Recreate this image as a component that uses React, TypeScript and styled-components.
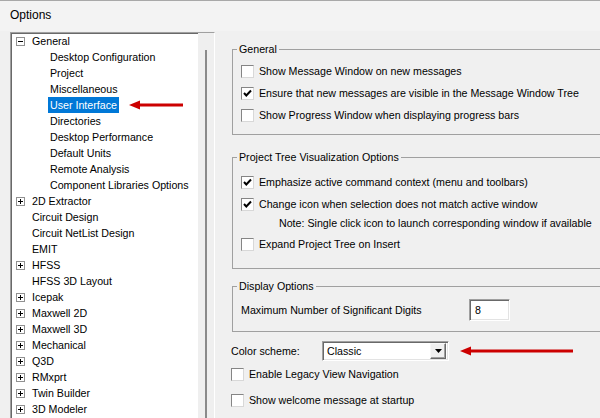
import React from 'react';
import styled, { createGlobalStyle } from 'styled-components';

const GlobalStyle = createGlobalStyle`
    html, body {
        margin: 0;
        padding: 0;
    }
    body {
        background: #f0f0f0;
        overflow: hidden;
        font-family: 'Liberation Sans', Arial, sans-serif;
    }
`;

const uiFont = '10.67px';

const Window = styled.div`
    width: 600px;
    height: 418px;
    overflow: hidden;
    display: flex;
    flex-direction: column;
    background: #f0f0f0;
    color: #000;
`;

const TitleBar = styled.div`
    flex-shrink: 0;
    height: 31px;
    box-sizing: border-box;
    border-top: 1px solid #a8a8a8;
    background: #f3f3f3;
    display: flex;
    align-items: center;
    padding: 0 0 2px 10px;
    font-size: 12px;
`;

const Body = styled.div`
    flex: 1;
    min-height: 0;
    display: flex;
    gap: 16px;
    padding: 1px 0 0 10px;
    font-size: ${uiFont};
`;

const TreePane = styled.div`
    flex-shrink: 0;
    width: 205px;
    height: 400px;
    box-sizing: border-box;
    display: flex;
    background: #fff;
    border: 1px solid;
    border-color: #a0a0a0 #fff #fff #a0a0a0;
    box-shadow: inset 1px 1px 0 #696969;
`;

const TreeList = styled.div`
    flex: 1;
`;

const ScrollTrack = styled.div`
    width: 16px;
    background: #efefef;
    display: flex;
    justify-content: center;
    padding-top: 17px;
`;

const ScrollThumb = styled.div`
    width: 2px;
    height: 100%;
    background: #8a8a8a;
`;

const TreeRow = styled.div<{ $level: number }>`
    display: flex;
    align-items: center;
    height: 16px;
    padding-left: ${p => 5 + p.$level * 18}px;
    white-space: nowrap;
`;

const ExpanderSlot = styled.span`
    width: 9px;
    height: 9px;
    margin-right: 5px;
    display: flex;
    flex-shrink: 0;
`;

const TreeLabel = styled.span<{ $selected?: boolean }>`
    line-height: 16px;
    padding: 0 2px;
    background: ${p => (p.$selected ? '#0078d7' : 'transparent')};
    color: ${p => (p.$selected ? '#fff' : '#000')};
`;

const Panel = styled.div`
    width: 400px;
    flex-shrink: 0;
    display: flex;
    flex-direction: column;
    padding-top: 10px;
`;

const GroupBox = styled.fieldset<{ $padTop: number; $padBottom: number; $gap: number }>`
    margin: ${p => p.$gap}px 0 0 1px;
    padding: ${p => p.$padTop}px 0 ${p => p.$padBottom}px 8px;
    border: 1px solid #a0a0a0;
    min-width: 0;
`;

const Legend = styled.legend`
    padding: 0 2px;
    margin-left: -4px;
    line-height: 14px;
    font-size: ${uiFont};
`;

const CheckRow = styled.div<{ $height?: number }>`
    display: flex;
    align-items: center;
    gap: 5px;
    height: ${p => p.$height ?? 22}px;
    white-space: nowrap;
`;

const Box = styled.span`
    width: 13px;
    height: 13px;
    box-sizing: border-box;
    flex-shrink: 0;
    background: #fff;
    border: 1px solid;
    border-color: #858585 #d8d8d8 #d8d8d8 #858585;
    display: flex;
`;

const NoteRow = styled.div`
    height: 15px;
    display: flex;
    align-items: center;
    padding-left: 38px;
    white-space: nowrap;
`;

const FieldRow = styled.div<{ $height: number; $labelWidth: number }>`
    display: flex;
    align-items: center;
    height: ${p => p.$height}px;
    white-space: nowrap;

    & > span:first-child {
        width: ${p => p.$labelWidth}px;
        flex-shrink: 0;
    }
`;

const Sunken = styled.div`
    box-sizing: border-box;
    background: #fff;
    border: 1px solid;
    border-color: #a0a0a0 #fff #fff #a0a0a0;
    box-shadow: inset 1px 1px 0 #696969, inset -1px -1px 0 #e3e3e3;
    display: flex;
    align-items: center;
`;

const NumberInput = styled(Sunken)`
    width: 41px;
    height: 22px;
    padding-left: 5px;
`;

const Select = styled(Sunken)`
    width: 127px;
    height: 20px;
    padding: 0 2px 0 4px;
    justify-content: space-between;
`;

const DropButton = styled.span`
    width: 16px;
    height: 16px;
    box-sizing: border-box;
    background: #f0f0f0;
    border: 1px solid;
    border-color: #f8f8f8 #696969 #696969 #f8f8f8;
    box-shadow: inset -1px -1px 0 #a0a0a0;
    display: flex;
    align-items: center;
    justify-content: center;
`;

const ArrowMark = styled.svg<{ $gap: number }>`
    margin-left: ${p => p.$gap}px;
    flex-shrink: 0;
`;

const OuterRows = styled.div`
    margin-top: 9px;
    display: flex;
    flex-direction: column;
`;

const RedArrow = ({ width, gap }: { width: number; gap: number }) => (
    <ArrowMark $gap={gap} width={width} height={10} viewBox={`0 0 ${width} 10`}>
        <polygon points="0,5 11,0.5 11,9.5" fill="#cc0000" />
        <rect x={10} y={3.5} width={width - 10} height={3} fill="#cc0000" />
    </ArrowMark>
);

const Expander = ({ open }: { open: boolean }) => (
    <svg width={9} height={9} viewBox="0 0 9 9">
        <rect x={0.5} y={0.5} width={8} height={8} fill="#fff" stroke="#919191" />
        <rect x={2} y={4} width={5} height={1} fill="#000" />
        {!open && <rect x={4} y={2} width={1} height={5} fill="#000" />}
    </svg>
);

const CheckBox = ({ checked }: { checked?: boolean }) => (
    <Box>
        {checked && (
            <svg width={11} height={11} viewBox="0 0 11 11">
                <polyline points="2,5 4.3,7.5 9,2.5" fill="none" stroke="#000" strokeWidth={2} />
            </svg>
        )}
    </Box>
);

interface TreeNode {
    label: string;
    level: number;
    expander?: 'open' | 'closed';
    selected?: boolean;
}

const treeNodes: TreeNode[] = [
    { label: 'General', level: 0, expander: 'open' },
    { label: 'Desktop Configuration', level: 1 },
    { label: 'Project', level: 1 },
    { label: 'Miscellaneous', level: 1 },
    { label: 'User Interface', level: 1, selected: true },
    { label: 'Directories', level: 1 },
    { label: 'Desktop Performance', level: 1 },
    { label: 'Default Units', level: 1 },
    { label: 'Remote Analysis', level: 1 },
    { label: 'Component Libraries Options', level: 1 },
    { label: '2D Extractor', level: 0, expander: 'closed' },
    { label: 'Circuit Design', level: 0 },
    { label: 'Circuit NetList Design', level: 0 },
    { label: 'EMIT', level: 0 },
    { label: 'HFSS', level: 0, expander: 'closed' },
    { label: 'HFSS 3D Layout', level: 0 },
    { label: 'Icepak', level: 0, expander: 'closed' },
    { label: 'Maxwell 2D', level: 0, expander: 'closed' },
    { label: 'Maxwell 3D', level: 0, expander: 'closed' },
    { label: 'Mechanical', level: 0, expander: 'closed' },
    { label: 'Q3D', level: 0, expander: 'closed' },
    { label: 'RMxprt', level: 0, expander: 'closed' },
    { label: 'Twin Builder', level: 0, expander: 'closed' },
    { label: '3D Modeler', level: 0, expander: 'closed' },
];

const App = () => (
    <>
        <GlobalStyle />
        <Window>
            <TitleBar>Options</TitleBar>
            <Body>
                <TreePane>
                    <TreeList>
                        {treeNodes.map(node => (
                            <TreeRow key={node.label} $level={node.level}>
                                <ExpanderSlot>
                                    {node.expander && <Expander open={node.expander === 'open'} />}
                                </ExpanderSlot>
                                <TreeLabel $selected={node.selected}>{node.label}</TreeLabel>
                                {node.selected && <RedArrow width={54} gap={10} />}
                            </TreeRow>
                        ))}
                    </TreeList>
                    <ScrollTrack>
                        <ScrollThumb />
                    </ScrollTrack>
                </TreePane>

                <Panel>
                    <GroupBox $gap={0} $padTop={4} $padBottom={8}>
                        <Legend>General</Legend>
                        <CheckRow>
                            <CheckBox />
                            Show Message Window on new messages
                        </CheckRow>
                        <CheckRow>
                            <CheckBox checked />
                            Ensure that new messages are visible in the Message Window Tree
                        </CheckRow>
                        <CheckRow>
                            <CheckBox />
                            Show Progress Window when displaying progress bars
                        </CheckRow>
                    </GroupBox>

                    <GroupBox $gap={15} $padTop={7} $padBottom={10}>
                        <Legend>Project Tree Visualization Options</Legend>
                        <CheckRow>
                            <CheckBox checked />
                            Emphasize active command context (menu and toolbars)
                        </CheckRow>
                        <CheckRow>
                            <CheckBox checked />
                            Change icon when selection does not match active window
                        </CheckRow>
                        <NoteRow>Note: Single click icon to launch corresponding window if available</NoteRow>
                        <CheckRow $height={28}>
                            <CheckBox />
                            Expand Project Tree on Insert
                        </CheckRow>
                    </GroupBox>

                    <GroupBox $gap={10} $padTop={4} $padBottom={8}>
                        <Legend>Display Options</Legend>
                        <FieldRow $height={26} $labelWidth={228}>
                            <span>Maximum Number of Significant Digits</span>
                            <NumberInput>8</NumberInput>
                        </FieldRow>
                    </GroupBox>

                    <OuterRows>
                        <FieldRow $height={20} $labelWidth={91}>
                            <span>Color scheme:</span>
                            <Select>
                                Classic
                                <DropButton>
                                    <svg width={7} height={4} viewBox="0 0 7 4">
                                        <polygon points="0,0 7,0 3.5,4" fill="#000" />
                                    </svg>
                                </DropButton>
                            </Select>
                            <RedArrow width={113} gap={11} />
                        </FieldRow>
                        <CheckRow $height={26}>
                            <CheckBox />
                            Enable Legacy View Navigation
                        </CheckRow>
                        <CheckRow $height={26}>
                            <CheckBox />
                            Show welcome message at startup
                        </CheckRow>
                    </OuterRows>
                </Panel>
            </Body>
        </Window>
    </>
);

export default App;
